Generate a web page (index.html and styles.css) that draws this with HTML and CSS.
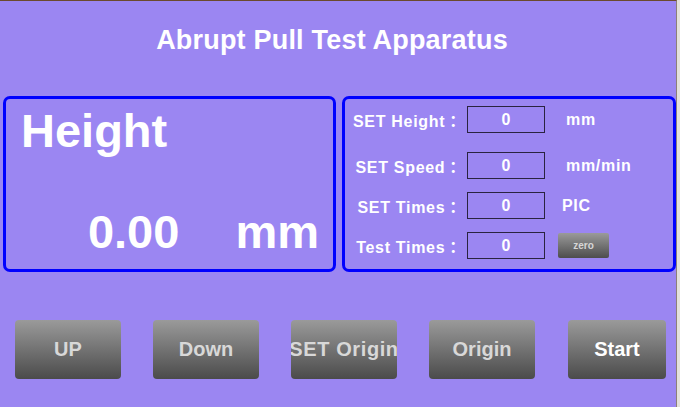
FILE: index.html
```html
<!DOCTYPE html>
<html lang="en">
<head>
<meta charset="utf-8">
<title>Abrupt Pull Test Apparatus</title>
<link rel="stylesheet" href="styles.css">
</head>
<body>
<div class="frame">
  <div class="screen">
    <h1 class="title">Abrupt Pull Test Apparatus</h1>
    <div class="panels">
      <section class="panel panel-height">
        <div class="height-label">Height</div>
        <div class="readout"><span class="readout-value">0.00</span><span class="readout-unit">mm</span></div>
      </section>
      <section class="panel panel-settings">
        <div class="row row-first">
          <span class="label">SET Height：</span><span class="field">0</span><span class="suffix">mm</span>
        </div>
        <div class="row">
          <span class="label">SET Speed：</span><span class="field">0</span><span class="suffix">mm/min</span>
        </div>
        <div class="row">
          <span class="label">SET Times：</span><span class="field">0</span><span class="suffix suffix-pic">PIC</span>
        </div>
        <div class="row">
          <span class="label">Test Times：</span><span class="field">0</span><button class="zero-btn">zero</button>
        </div>
      </section>
    </div>
    <div class="buttons">
      <button class="btn">UP</button>
      <button class="btn">Down</button>
      <button class="btn btn-wide-text">SET Origin</button>
      <button class="btn">Origin</button>
      <button class="btn btn-start">Start</button>
    </div>
  </div>
</div>
</body>
</html>
```
FILE: styles.css
```css
html, body {
  margin: 0;
  padding: 0;
  background: #e4e0dc;
}

.frame {
  width: 680px;
  height: 407px;
  background: #e4e0dc;
  overflow: hidden;
}

.screen {
  width: 676px;
  height: 406px;
  background: #9b86f2;
  border-top: 1px solid #6b4a2e;
  border-right: 1px solid #8c7f78;
  font-family: "Liberation Sans", "Noto Sans CJK JP", Arial, sans-serif;
  font-weight: bold;
  color: #ffffff;
}

.title {
  margin: 0;
  height: 95px;
  box-sizing: border-box;
  padding: 26px 12px 0 0;
  font-size: 27px;
  line-height: 27px;
  letter-spacing: 0.2px;
  text-align: center;
  font-weight: bold;
}

.panels {
  display: flex;
  gap: 6px;
  padding-left: 3px;
  height: 176px;
}

.panel {
  box-sizing: border-box;
  height: 176px;
  border: 3px solid #0000ff;
  border-radius: 7px;
}

.panel-height {
  width: 333px;
  display: flex;
  flex-direction: column;
  justify-content: space-between;
  padding: 8px 14px 14px 15px;
}

.height-label {
  font-size: 47px;
  line-height: 47px;
}

.readout {
  display: flex;
  justify-content: flex-end;
  gap: 56px;
  font-size: 47px;
  line-height: 47px;
}

.panel-settings {
  width: 334px;
  display: flex;
  flex-direction: column;
  gap: 13px;
  padding: 7px 0 0 5px;
}

.row {
  display: flex;
  align-items: center;
  height: 27px;
  font-size: 16px;
  letter-spacing: 0.7px;
}

.row-first {
  margin-bottom: 6px;
}

.label {
  width: 112px;
  text-align: right;
  white-space: nowrap;
}

.field {
  box-sizing: border-box;
  width: 78px;
  height: 27px;
  margin-left: 5px;
  border: 1px solid #2a2340;
  text-align: center;
  line-height: 25px;
  letter-spacing: 0;
}

.suffix {
  margin-left: 21px;
}

.suffix-pic {
  margin-left: 17px;
}

.zero-btn {
  margin-left: 13px;
  width: 51px;
  height: 25px;
  border: none;
  border-radius: 2px;
  background: linear-gradient(#9a9a9a, #4d4d4d);
  color: #d6d6d6;
  font-family: "Liberation Sans", Arial, sans-serif;
  font-size: 10px;
  font-weight: bold;
  padding: 0;
}

.buttons {
  display: flex;
  gap: 32px;
  margin-top: 48px;
  padding-left: 15px;
}

.btn {
  width: 106px;
  height: 59px;
  padding: 0;
  border: none;
  border-radius: 4px;
  background: linear-gradient(#9a9a9a, #4b4b4b);
  color: #d8d8d8;
  font-family: "Liberation Sans", Arial, sans-serif;
  font-size: 20px;
  font-weight: bold;
  white-space: nowrap;
  overflow: hidden;
  display: flex;
  align-items: center;
  justify-content: center;
}

.btn-wide-text {
  letter-spacing: 0.6px;
}

.btn-start {
  width: 98px;
  margin-left: 1px;
  color: #ffffff;
}
```
